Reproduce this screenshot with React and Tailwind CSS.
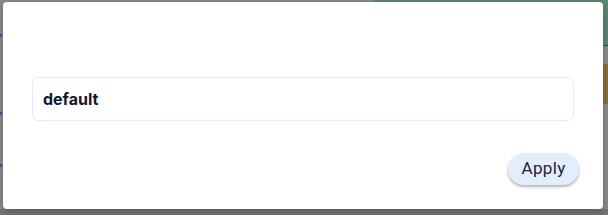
export default function App() {
    return (
        <div className="relative w-[608px] h-[215px] overflow-hidden bg-[#8b8b8b]">
            {/* dimmed page behind the dialog */}
            <div className="flex flex-col h-full">
                <div className="flex h-[46px]">
                    <div className="w-[374px]" />
                    <div className="flex-1 bg-[#5b8a70] border-b border-[#3d4d44]" />
                </div>
                <div className="flex flex-1 justify-between pt-[18px]">
                    <div className="flex flex-col">
                        <div className="w-[2px] h-[3px] bg-[#2f5d9e] -mt-[30px]" />
                        <div className="w-[2px] h-[3px] bg-[#2f5d9e] mt-[75px]" />
                        <div className="w-[2px] h-[3px] bg-[#2f5d9e] mt-[49px]" />
                    </div>
                    <div className="w-[8px] h-[40px] bg-[#8a7036]" />
                </div>
                <div className="h-[6px] bg-[#747474]" />
            </div>

            {/* dialog */}
            <div className="absolute left-[3px] top-[2px] w-[600px] h-[207px] bg-white rounded-[4px] shadow-[0_2px_8px_rgba(0,0,0,0.25)] px-[29px] pt-[75px] flex flex-col">
                <div className="h-[44px] w-full rounded-[6px] border border-[#e2edf9] bg-white flex items-center px-[10px]">
                    <span className="font-['Inter',sans-serif] text-[16px] font-bold text-[#111a2c]">default</span>
                </div>
                <div className="flex justify-end mt-[32px]">
                    <button className="h-[32px] w-[71px] -mr-[5px] rounded-full bg-[#e3eefd] shadow-[0_2px_3px_rgba(0,0,0,0.3)] font-['Roboto',sans-serif] text-[17px] tracking-[0.02em] text-[#1b2333]">
                        Apply
                    </button>
                </div>
            </div>
        </div>
    );
}
